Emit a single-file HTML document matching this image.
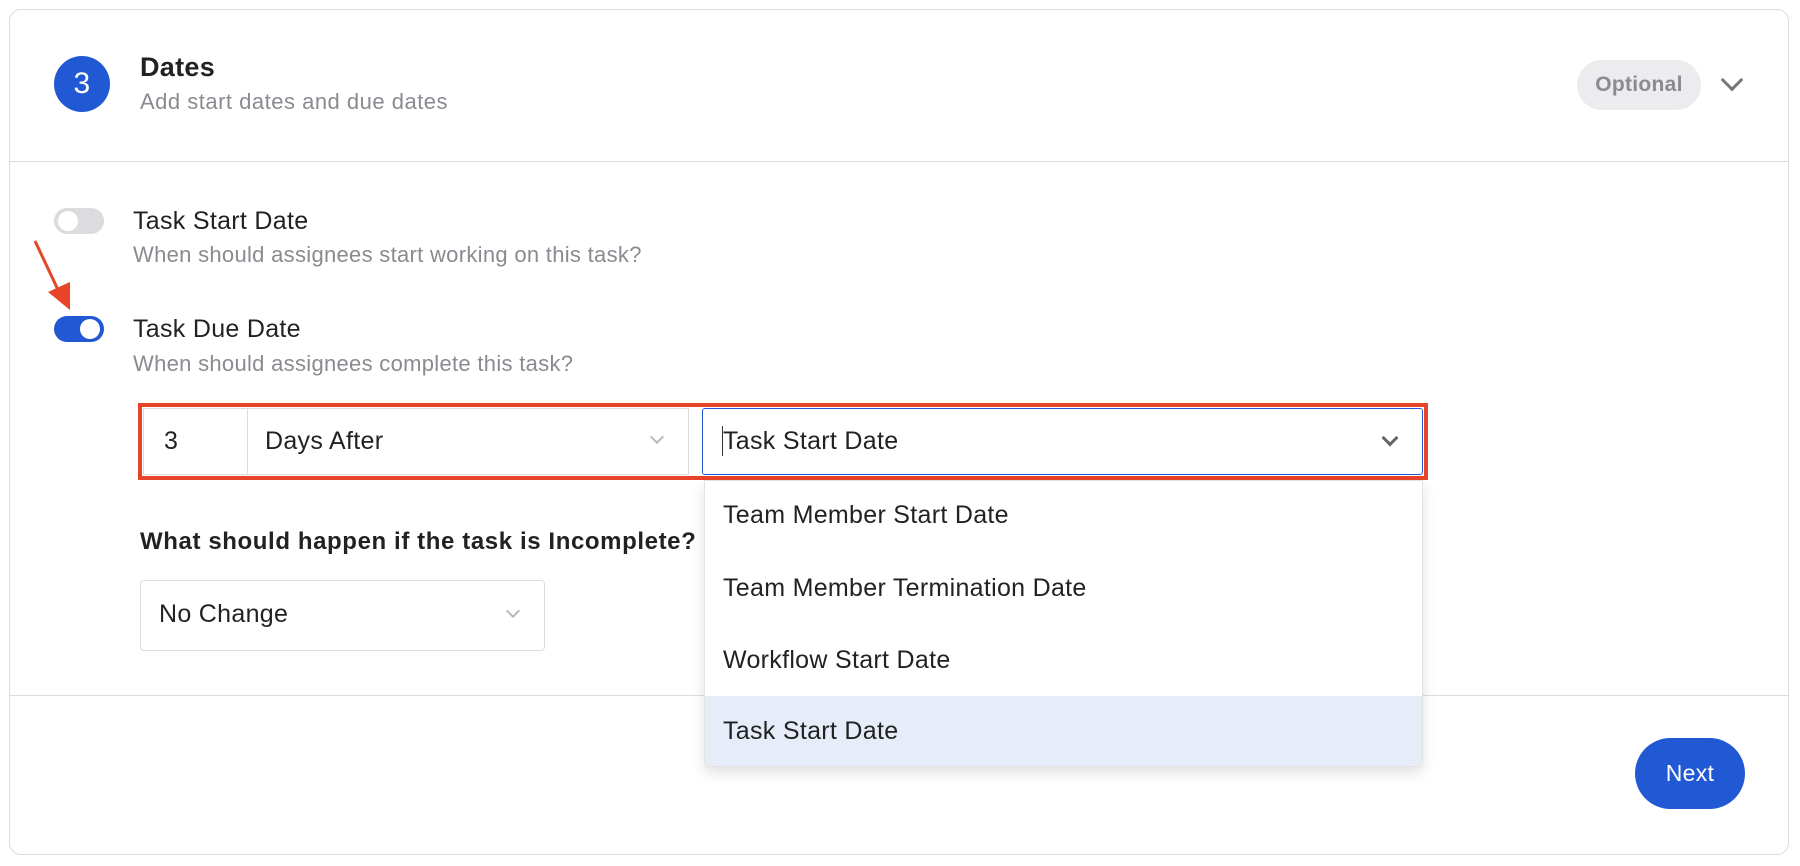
<!DOCTYPE html>
<html><head><style>
*{box-sizing:border-box;margin:0;padding:0}
body{width:1800px;height:866px;background:#fff;font-family:"Liberation Sans",sans-serif;position:relative;overflow:hidden;color:#222;letter-spacing:0.3px}
.a{position:absolute}
.card{left:9px;top:9px;width:1780px;height:846px;border:1px solid #dcdcdc;border-radius:12px}
.hr{height:1px;background:#dcdcdc;left:10px;width:1778px}
.gray{color:#8a8a90}
.tog{width:50px;height:26px;border-radius:13px}
.knob{width:20px;height:20px;border-radius:50%;background:#fff;top:3px}
.chev{width:10px;height:10px;border-right:2.5px solid #bbb;border-bottom:2.5px solid #bbb;transform:rotate(45deg)}
</style></head><body>
<div class="a card"></div>
<div class="a" style="left:54px;top:56px;width:56px;height:56px;border-radius:50%;background:#2158d3;color:#fff;font-size:30px;text-align:center;line-height:56px">3</div>
<div class="a" style="left:140px;top:52px;font-size:27px;font-weight:bold;color:#222">Dates</div>
<div class="a gray" style="left:140px;top:89px;font-size:22px;letter-spacing:0.5px">Add start dates and due dates</div>
<div class="a" style="left:1577px;top:60px;width:124px;height:50px;border-radius:25px;background:#ececee;color:#8a8a90;font-weight:bold;font-size:21px;text-align:center;line-height:50px">Optional</div>
<div class="a chev" style="left:1724px;top:72px;width:16px;height:16px;border-color:#777;border-width:3px"></div>
<div class="a hr" style="top:161px"></div>

<div class="a tog" style="left:54px;top:208px;background:#dcdcdf"><div class="a knob" style="left:4px"></div></div>
<div class="a" style="left:133px;top:207px;font-size:25px;letter-spacing:0.3px">Task Start Date</div>
<div class="a gray" style="left:133px;top:242px;font-size:22px;letter-spacing:0.3px">When should assignees start working on this task?</div>

<svg class="a" style="left:28px;top:236px" width="50" height="80"><line x1="7" y1="5" x2="32" y2="58" stroke="#e8442a" stroke-width="3"/><polygon points="42,74 20,56 42,46" fill="#e8442a"/></svg>

<div class="a tog" style="left:54px;top:316px;background:#2158d3"><div class="a knob" style="left:26px"></div></div>
<div class="a" style="left:133px;top:315px;font-size:25px;letter-spacing:0.3px">Task Due Date</div>
<div class="a gray" style="left:133px;top:351px;font-size:22px;letter-spacing:0.3px">When should assignees complete this task?</div>

<div class="a" style="left:138px;top:403px;width:1290px;height:77px;border:4px solid #e8442a"></div>
<div class="a" style="left:143px;top:408px;width:546px;height:67px;border:1px solid #ddd;background:#fff"></div>
<div class="a" style="left:247px;top:408px;width:1px;height:67px;background:#ddd"></div>
<div class="a" style="left:164px;top:427px;font-size:25px">3</div>
<div class="a" style="left:265px;top:427px;font-size:25px">Days After</div>
<div class="a chev" style="left:652px;top:432px"></div>
<div class="a" style="left:702px;top:408px;width:721px;height:67px;border:1px solid #2158d3;border-radius:3px"></div>
<div class="a" style="left:722px;top:426px;width:1px;height:30px;background:#333"></div>
<div class="a" style="left:723px;top:427px;font-size:25px">Task Start Date</div>
<div class="a chev" style="left:1384px;top:432px;border-color:#666;border-width:3px;width:12px;height:12px"></div>

<div class="a" style="left:140px;top:528px;font-size:24px;font-weight:bold;letter-spacing:0.6px">What should happen if the task is Incomplete?</div>
<div class="a" style="left:140px;top:580px;width:405px;height:71px;border:1px solid #ddd;border-radius:4px"></div>
<div class="a" style="left:159px;top:600px;font-size:25px">No Change</div>
<div class="a chev" style="left:508px;top:606px"></div>

<div class="a hr" style="top:695px"></div>

<div class="a" style="left:704px;top:480px;width:719px;height:287px;background:#fff;border:1px solid #e2e2e2;border-radius:0 0 6px 6px;box-shadow:0 6px 14px rgba(0,0,0,.12);overflow:hidden;letter-spacing:0.3px">
<div style="height:72px;line-height:68px;padding-left:18px;font-size:25px">Team Member Start Date</div>
<div style="height:72px;line-height:70px;padding-left:18px;font-size:25px">Team Member Termination Date</div>
<div style="height:71px;line-height:70px;padding-left:18px;font-size:25px">Workflow Start Date</div>
<div style="height:72px;line-height:70px;padding-left:18px;font-size:25px;background:#e7edf8">Task Start Date</div>
</div>

<div class="a" style="left:1635px;top:738px;width:110px;height:71px;border-radius:36px;background:#2158d3;color:#fff;font-size:23px;text-align:center;line-height:71px">Next</div>
</body></html>
